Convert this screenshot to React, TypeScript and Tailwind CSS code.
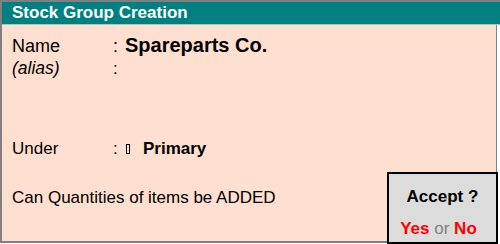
export default function App() {
  return (
    <div className="relative w-[500px] h-[244px] overflow-hidden bg-white font-['Liberation_Sans',Arial,sans-serif] text-black">
      <div className="h-[2px] bg-[#808080]" />
      <div className="border-l-2 border-[#808080]">
        <div className="h-[22px] bg-[#008080] pl-[10px] text-[17px] leading-[22px] font-bold text-white">
          Stock Group Creation
        </div>
        <div className="h-px bg-[#b8c4c0]" />
        <div className="mr-[3px] h-[218px] border-r border-b-2 border-[#808080] bg-[#ffdfcf] pl-[10px] pt-[9px]">
          <div className="flex h-[23px] items-baseline leading-[22px]">
            <span className="w-[101px] text-[18px]">Name</span>
            <span className="w-[12px] text-[18px]">:</span>
            <span className="text-[20px] font-bold">Spareparts Co.</span>
          </div>
          <div className="flex h-[22px] items-baseline leading-[22px]">
            <span className="w-[101px] text-[17.5px] italic">(alias)</span>
            <span className="text-[17px]">:</span>
          </div>
          <div className="mt-[59px] flex h-[22px] items-baseline leading-[22px]">
            <span className="w-[101px] text-[17px]">Under</span>
            <span className="w-[13px] text-[17px]">:</span>
            <span className="mr-[13px] inline-block h-[10px] w-[4px] border border-black" />
            <span className="text-[17px] font-bold">Primary</span>
          </div>
          <div className="mt-[27px] h-[22px] text-[17px] leading-[22px]">
            Can Quantities of items be ADDED
          </div>
        </div>
      </div>
      <div className="absolute left-[387px] top-[172px] h-[72px] w-[111px] border-2 border-black bg-[#dcdcdc] pt-[12px] text-center text-[17px] leading-[22px]">
        <div className="font-bold">Accept ?</div>
        <div className="mt-[10px] pr-[8px]">
          <span className="font-bold text-[#ff0000]">Yes</span>{' '}
          <span className="text-[#808080]">or</span>{' '}
          <span className="font-bold text-[#ff0000]">No</span>
        </div>
      </div>
    </div>
  );
}
